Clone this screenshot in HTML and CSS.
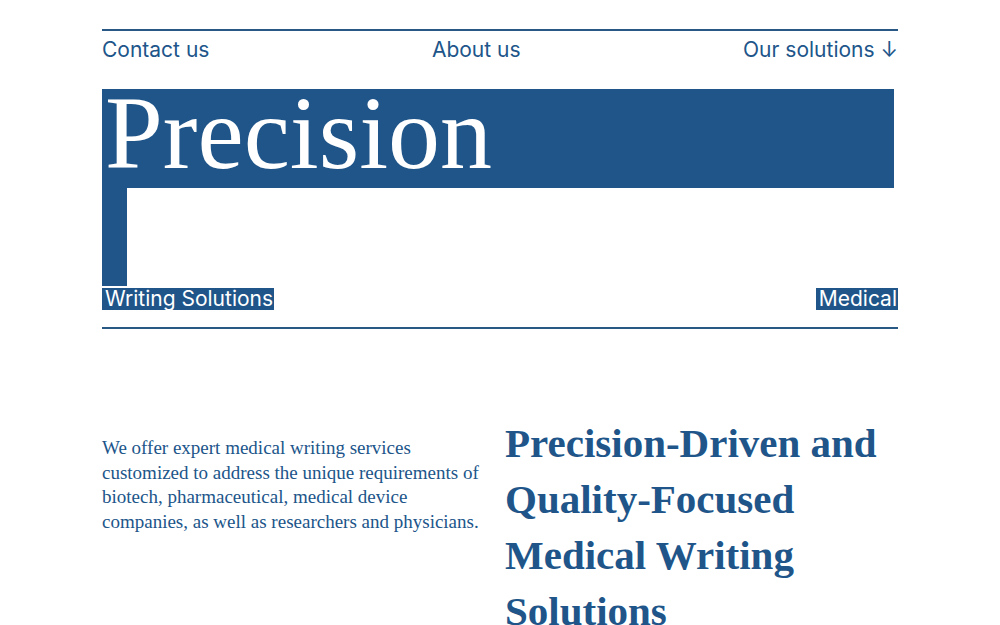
FILE: index.html
```html
<!DOCTYPE html>
<html lang="en">
<head>
<meta charset="utf-8">
<title>Precision Writing Solutions</title>
<link rel="stylesheet" href="styles.css">
</head>
<body>
<div class="page">
  <header class="top">
    <nav class="nav">
      <a class="nav-link" href="#">Contact us</a>
      <a class="nav-link" href="#">About us</a>
      <a class="nav-link" href="#">Our solutions ↓</a>
    </nav>
  </header>
  <section class="hero">
    <h1 class="hero-title">Precision</h1>
    <div class="hero-bar"></div>
    <div class="hero-labels">
      <span class="label">Writing Solutions</span>
      <span class="label">Medical</span>
    </div>
  </section>
  <section class="intro">
    <p class="intro-text">We offer expert medical writing services customized to address the unique requirements of biotech, pharmaceutical, medical device companies, as well as researchers and physicians.</p>
    <h2 class="intro-heading">Precision-Driven and Quality-Focused Medical Writing Solutions</h2>
  </section>
</div>
</body>
</html>
```
FILE: styles.css
```css
html, body {
  margin: 0;
  padding: 0;
  background: #ffffff;
}
.page {
  width: 796px;
  margin: 0 auto;
  padding-top: 29px;
  color: #20558a;
}
.top {
  border-top: 2px solid #2a5884;
}
.nav {
  display: flex;
  justify-content: space-between;
  margin-top: 7px;
  font-family: "Inter", "Liberation Sans", sans-serif;
  font-size: 21px;
  line-height: 24px;
}
.nav-link {
  color: #20558a;
  text-decoration: none;
}
.hero {
  margin-top: 27px;
  border-bottom: 2px solid #2a5884;
  padding-bottom: 17px;
}
.hero-title {
  margin: 0;
  width: 792px;
  height: 99px;
  background: #1f5589;
  color: #ffffff;
  font-family: "Liberation Serif", serif;
  font-weight: normal;
  font-size: 104px;
  line-height: 87px;
  padding-left: 3px;
  box-sizing: border-box;
}
.hero-bar {
  width: 25px;
  height: 98px;
  background: #1f5589;
}
.hero-labels {
  display: flex;
  justify-content: space-between;
  margin-top: 2px;
}
.label {
  display: inline-block;
  height: 22px;
  line-height: 22px;
  padding: 0 1px 0 3px;
  background: #1f5589;
  color: #ffffff;
  font-family: "Inter", "Liberation Sans", sans-serif;
  font-size: 21px;
}
.intro {
  display: grid;
  grid-template-columns: 1fr 1fr;
  column-gap: 10px;
  margin-top: 86px;
  align-items: start;
}
.intro-text {
  margin: 21px 0 0;
  font-family: "Liberation Serif", serif;
  font-size: 19px;
  line-height: 24.5px;
}
.intro-heading {
  margin: 0;
  font-family: "Liberation Serif", serif;
  font-weight: bold;
  font-size: 41px;
  line-height: 56px;
}
```
